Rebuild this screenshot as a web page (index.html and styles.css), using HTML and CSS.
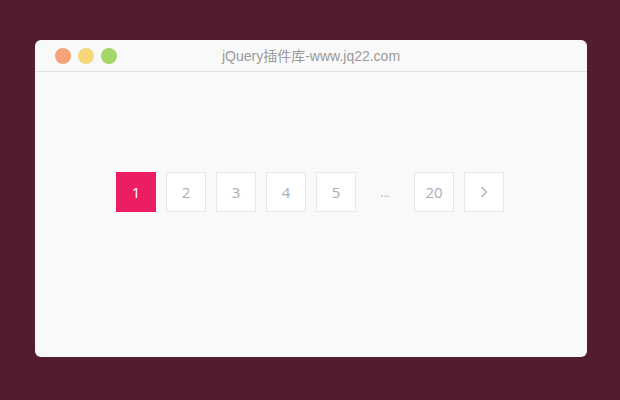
FILE: index.html
```html
<!DOCTYPE html>
<html>
<head>
<meta charset="utf-8">
<link rel="stylesheet" href="styles.css">
</head>
<body>
<div class="window">
  <div class="titlebar">
    <div class="dots">
      <span class="dot red"></span>
      <span class="dot yellow"></span>
      <span class="dot green"></span>
    </div>
    <div class="title">jQuery插件库-www.jq22.com</div>
  </div>
  <div class="content">
    <ul class="pager">
      <li class="page active">1</li>
      <li class="page">2</li>
      <li class="page">3</li>
      <li class="page">4</li>
      <li class="page">5</li>
      <li class="ellipsis">...</li>
      <li class="page">20</li>
      <li class="page next"><svg width="10" height="14" viewBox="0 0 10 14"><path d="M2.5 2 L7.5 7 L2.5 12" fill="none" stroke="#b0b4bc" stroke-width="1.4"/></svg></li>
    </ul>
  </div>
</div>
</body>
</html>
```
FILE: styles.css
```css
html, body {
  margin: 0;
  padding: 0;
}
body {
  background: #521e2f;
  width: 620px;
  height: 400px;
  padding-top: 40px;
  box-sizing: border-box;
  font-family: "Liberation Sans", Arial, sans-serif;
}
.window {
  margin-left: 35px;
  width: 552px;
  height: 317px;
  background: #f9f9f9;
  border-radius: 6px;
  overflow: hidden;
}
.titlebar {
  height: 31px;
  border-bottom: 1px solid #e0e0e0;
  display: flex;
  align-items: center;
  position: relative;
}
.dots {
  display: flex;
  gap: 7px;
  padding-left: 20px;
  padding-top: 1px;
}
.dot {
  width: 16px;
  height: 16px;
  border-radius: 50%;
  display: block;
}
.red { background: #f7a27b; }
.yellow { background: #f8d77b; }
.green { background: #a6d66a; }
.title {
  position: absolute;
  left: 0;
  right: 0;
  top: 1px;
  line-height: 31px;
  text-align: center;
  color: #9a9a9a;
  font-size: 14px;
  font-family: "Liberation Sans", "Noto Sans CJK SC", sans-serif;
}
.content {
  padding-top: 100px;
}
.pager {
  list-style: none;
  margin: 0;
  padding: 0 2px 0 0;
  display: flex;
  justify-content: center;
  gap: 10px;
}
.page {
  width: 40px;
  height: 40px;
  box-sizing: border-box;
  border: 1px solid #e6e6e6;
  background: #fff;
  display: flex;
  align-items: center;
  justify-content: center;
  color: #a9adb5;
  font-family: "Open Sans", sans-serif;
  font-size: 15px;
}
.page.active {
  background: #ec1e63;
  border-color: #ec1e63;
  color: #fff;
}
.ellipsis {
  width: 38px;
  height: 40px;
  display: flex;
  align-items: center;
  justify-content: center;
  color: #b0b4bc;
  font-family: "Open Sans", sans-serif;
  font-size: 12px;
}
.next svg {
  display: block;
}
```
